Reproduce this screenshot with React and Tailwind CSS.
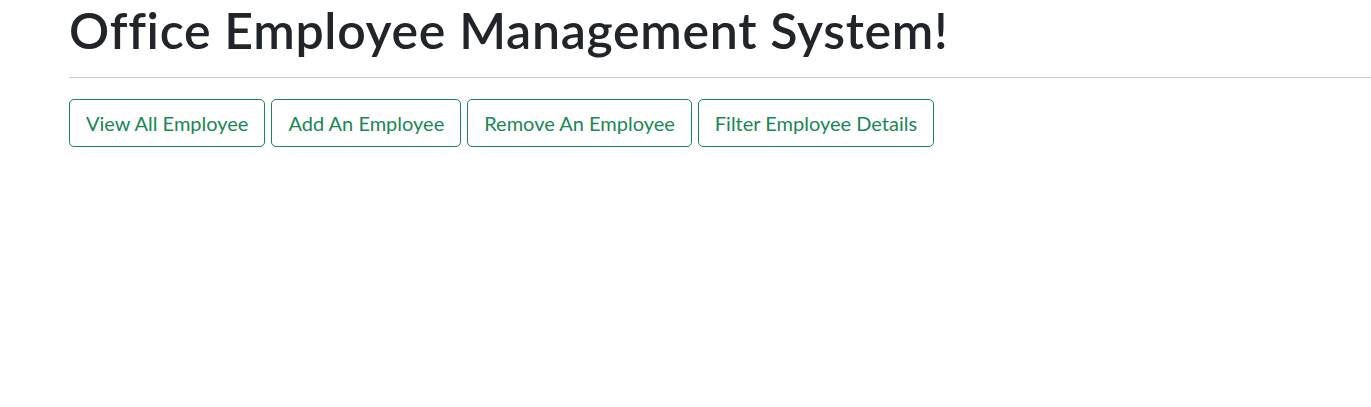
const buttons = [
  "View All Employee",
  "Add An Employee",
  "Remove An Employee",
  "Filter Employee Details",
];

const App = () => {
  return (
    <main className="min-h-screen bg-white font-['Lato',sans-serif] overflow-hidden">
      <div className="pl-[69px]">
        <h1 className="text-[50px] leading-[60px] font-semibold tracking-[0.7px] text-[#212529] whitespace-nowrap">
          Office Employee Management System!
        </h1>
      </div>
      <hr className="ml-[69px] mt-[17px] border-0 border-t border-[#c8c9ca]" />
      <div className="pl-[69px] mt-[21px] flex gap-[6px]">
        {buttons.map((b) => (
          <button
            key={b}
            className="h-[48px] px-[16px] text-[20px] text-[#198754] border border-[#198754] rounded-[5px] bg-white"
          >
            {b}
          </button>
        ))}
      </div>
    </main>
  );
};

export default App;
